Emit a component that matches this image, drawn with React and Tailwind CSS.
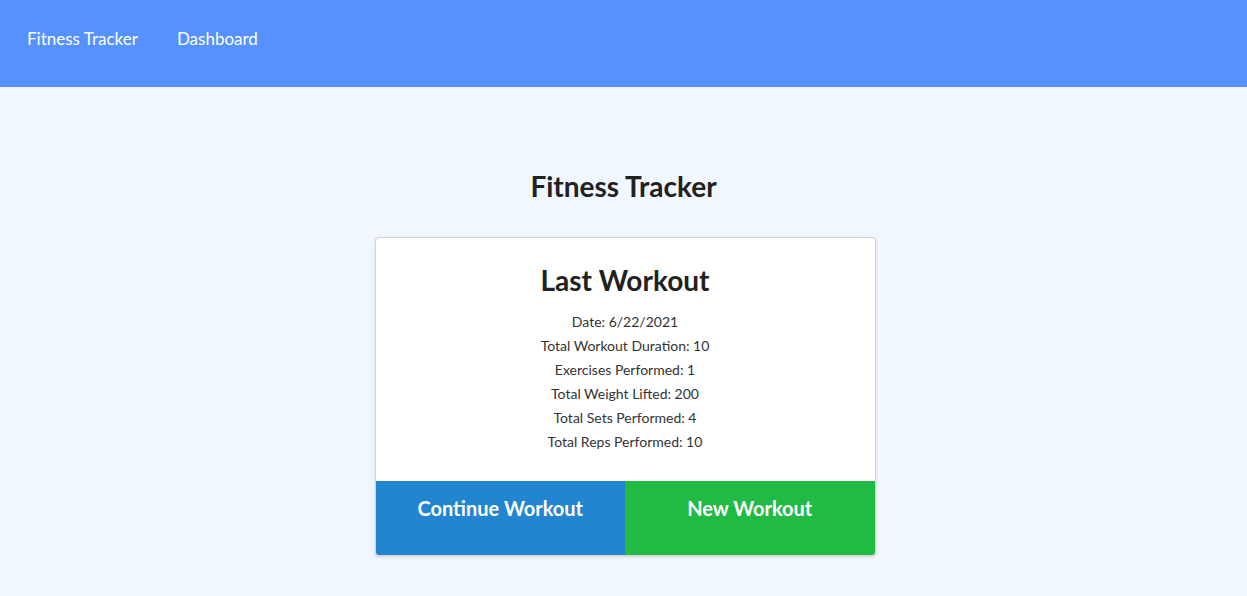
import React from 'react';

const stats = [
    'Date: 6/22/2021',
    'Total Workout Duration: 10',
    'Exercises Performed: 1',
    'Total Weight Lifted: 200',
    'Total Sets Performed: 4',
    'Total Reps Performed: 10',
];

export default function App() {
    return (
        <div className="min-h-[596px] bg-[#f0f7ff] font-['Lato',sans-serif] text-[#212121]">
            {/* Top nav */}
            <nav className="h-[87px] bg-[#5592ff] flex items-start pt-[29px] px-[27px] gap-[39px] text-white text-[17px] leading-[20px]">
                <a href="#">Fitness Tracker</a>
                <a href="#">Dashboard</a>
            </nav>

            <main className="flex flex-col items-center pt-[85px]">
                <h1 className="text-[28px] font-bold leading-[28px]">Fitness Tracker</h1>

                {/* Last workout card */}
                <div className="mt-[37px] ml-[3px] w-[501px] bg-white rounded-[4px] border border-[#d4d4d5] shadow-[0_1px_3px_0_#d4d4d5] overflow-hidden">
                    <div className="flex flex-col items-center pt-[26px] pb-[27px]">
                        <h2 className="text-[28px] font-bold leading-[32px]">Last Workout</h2>
                        <div className="mt-[14px] flex flex-col items-center text-[14px] leading-[24px] text-[#333]">
                            {stats.map((s) => (
                                <p key={s}>{s}</p>
                            ))}
                        </div>
                    </div>
                    <div className="grid grid-cols-2 h-[74px] text-white text-[20px] font-bold">
                        <button className="bg-[#2185d0] pt-[12px] flex justify-center items-start">Continue Workout</button>
                        <button className="bg-[#21ba45] pt-[12px] flex justify-center items-start">New Workout</button>
                    </div>
                </div>
            </main>
        </div>
    );
}
